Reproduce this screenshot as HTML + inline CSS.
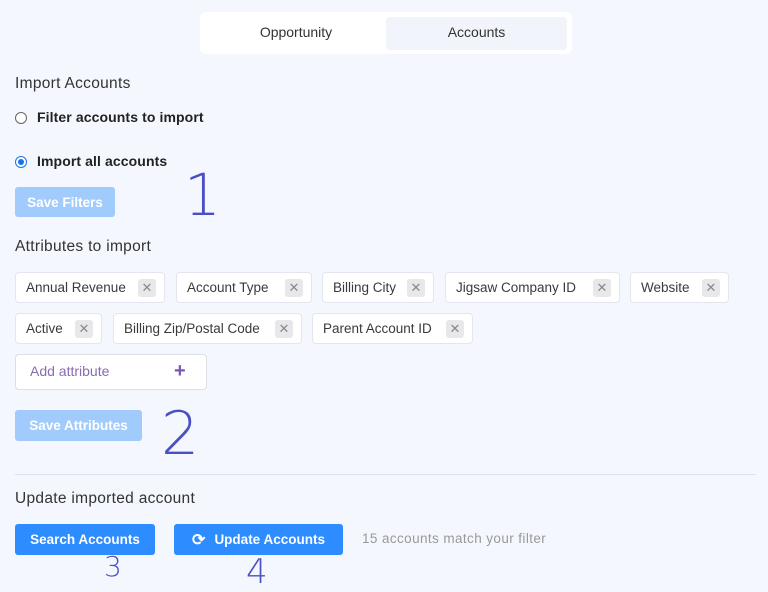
<!DOCTYPE html>
<html><head><style>
*{box-sizing:border-box;margin:0;padding:0}
body{width:768px;height:589px;background:#f4f7fd;font-family:"Liberation Sans",sans-serif;color:#333;position:relative;overflow:hidden}
.a{position:absolute}
.tag{position:absolute;height:31px;background:#fff;border:1px solid #e3e6ee;border-radius:4px;font-size:13.5px;color:#3a3a3a;display:flex;align-items:center;padding-left:10px}
.x{position:absolute;right:8px;top:6px;width:18px;height:18px;background:#e8e8ea;border-radius:3px;color:#888;font-size:13px;text-align:center;line-height:18px}
.btn{position:absolute;border-radius:3px;color:#fff;font-weight:bold;font-size:13.5px;display:flex;align-items:center;justify-content:center}
.num{position:absolute;color:#4a4fc4;font-family:"DejaVu Sans",sans-serif;font-weight:200;line-height:1}
</style></head><body>
<div class="a" style="left:200px;top:12px;width:372px;height:42px;background:#fff;border-radius:6px"></div>
<div class="a" style="left:386px;top:17px;width:181px;height:33px;background:#f1f4fb;border-radius:4px"></div>
<div class="a" style="left:200px;top:24px;width:192px;text-align:center;font-size:14px;color:#333">Opportunity</div>
<div class="a" style="left:386px;top:24px;width:181px;text-align:center;font-size:14px;color:#333">Accounts</div>

<div class="a" style="left:15px;top:75px;font-size:15.5px;color:#333;letter-spacing:0.3px">Import Accounts</div>
<div class="a" style="left:15px;top:112px;width:12px;height:12px;border:1px solid #666;border-radius:50%;background:#fff"></div>
<div class="a" style="left:37px;top:109px;font-size:14px;color:#222;letter-spacing:0.1px;font-weight:bold">Filter accounts to import</div>
<div class="a" style="left:15px;top:156px;width:12px;height:12px;border:1px solid #1a73e8;border-radius:50%;background:#fff"><div style="margin:2px;width:6px;height:6px;border-radius:50%;background:#1a73e8"></div></div>
<div class="a" style="left:37px;top:153px;font-size:14px;color:#222;letter-spacing:0.1px;font-weight:bold">Import all accounts</div>
<div class="btn" style="left:15px;top:187px;width:100px;height:30px;background:#a2cbfd">Save Filters</div>
<div class="num" style="left:184px;top:166px;font-size:58px">1</div>

<div class="a" style="left:15px;top:238px;font-size:15.5px;color:#333;letter-spacing:0.3px">Attributes to import</div>
<div class="tag" style="left:15px;top:272px;width:150px">Annual Revenue<span class="x">✕</span></div>
<div class="tag" style="left:176px;top:272px;width:136px">Account Type<span class="x">✕</span></div>
<div class="tag" style="left:322px;top:272px;width:112px">Billing City<span class="x">✕</span></div>
<div class="tag" style="left:445px;top:272px;width:175px">Jigsaw Company ID<span class="x">✕</span></div>
<div class="tag" style="left:630px;top:272px;width:99px">Website<span class="x">✕</span></div>
<div class="tag" style="left:15px;top:313px;width:87px">Active<span class="x">✕</span></div>
<div class="tag" style="left:113px;top:313px;width:189px">Billing Zip/Postal Code<span class="x">✕</span></div>
<div class="tag" style="left:312px;top:313px;width:161px">Parent Account ID<span class="x">✕</span></div>
<div class="a" style="left:15px;top:354px;width:192px;height:36px;background:#fff;border:1px solid #dcdfe6;border-radius:4px"></div>
<div class="a" style="left:30px;top:363px;font-size:14px;color:#8a6bb0">Add attribute</div>
<div class="a" style="left:174px;top:360px;font-size:20px;font-weight:bold;color:#7a57b0">+</div>
<div class="btn" style="left:15px;top:410px;width:127px;height:31px;background:#a2cbfd">Save Attributes</div>
<div class="num" style="left:161px;top:404px;font-size:60px">2</div>

<div class="a" style="left:15px;top:474px;width:741px;height:1px;background:#dde1e8"></div>
<div class="a" style="left:15px;top:490px;font-size:15.5px;color:#333;letter-spacing:0.3px">Update imported account</div>
<div class="btn" style="left:15px;top:524px;width:140px;height:31px;background:#2d8cff">Search Accounts</div>
<div class="btn" style="left:174px;top:524px;width:169px;height:31px;background:#2d8cff"><span style="font-size:16px;margin-right:9px">⟳</span>Update Accounts</div>
<div class="a" style="left:362px;top:531px;font-size:13.5px;color:#999;letter-spacing:0.4px">15 accounts match your filter</div>
<div class="num" style="left:104px;top:553px;font-size:28px">3</div>
<div class="num" style="left:246px;top:555px;font-size:34px">4</div>
</body></html>
